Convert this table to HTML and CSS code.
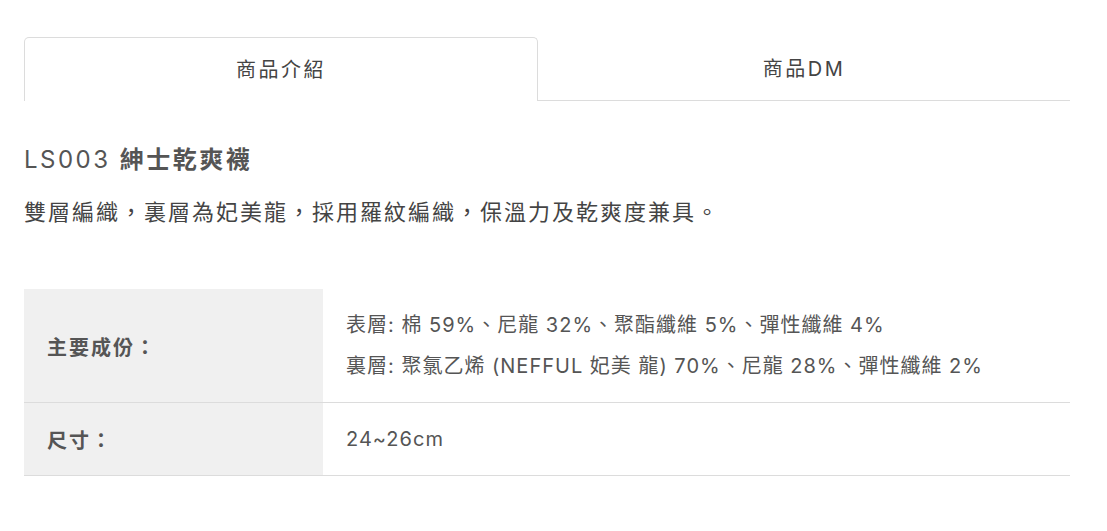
FILE: index.html
```html
<!DOCTYPE html>
<html lang="zh-Hant">
<head>
<meta charset="utf-8">
<title>LS003 紳士乾爽襪</title>
<link rel="stylesheet" href="styles.css">
</head>
<body>
<div class="page">
  <div class="tabs">
    <div class="tab active">商品介紹</div>
    <div class="tab">商品DM</div>
  </div>
  <h1 class="title">LS003 <b>紳士乾爽襪</b></h1>
  <p class="desc">雙層編織，裏層為妃美龍，採用羅紋編織，保溫力及乾爽度兼具。</p>
  <table class="spec">
    <tr class="row-tall">
      <th>主要成份：</th>
      <td>
        <div class="line">表層: 棉 59%、尼龍 32%、聚酯纖維 5%、彈性纖維 4%</div>
        <div class="line">裏層: 聚氯乙烯 (NEFFUL 妃美 龍) 70%、尼龍 28%、彈性纖維 2%</div>
      </td>
    </tr>
    <tr>
      <th>尺寸：</th>
      <td><div class="line">24~26cm</div></td>
    </tr>
  </table>
</div>
</body>
</html>
```
FILE: styles.css
```css
html, body {
  margin: 0;
  padding: 0;
  background: #fff;
}
body {
  font-family: Inter, "Noto Sans CJK TC", sans-serif;
  color: #555;
}
.page {
  width: 1046px;
  padding: 37px 0 0 24px;
}
.tabs {
  display: flex;
  height: 64px;
}
.tab {
  box-sizing: border-box;
  height: 64px;
  display: flex;
  align-items: center;
  justify-content: center;
  font-size: 20px;
  letter-spacing: 2.5px;
  color: #444;
  padding-bottom: 2px;
}
.tab.active {
  width: 514px;
  border: 1px solid #dcdcdc;
  border-bottom: none;
  border-radius: 5px 5px 0 0;
}
.tab:not(.active) {
  flex: 1;
  border-bottom: 1px solid #dcdcdc;
}
.title {
  margin: 43px 0 0 0;
  font-size: 24px;
  line-height: 32px;
  font-weight: 400;
  letter-spacing: 2.5px;
  color: #555;
}
.title b {
  font-weight: 700;
}
.desc {
  margin: 20px 0 0 0;
  font-size: 22px;
  line-height: 32px;
  letter-spacing: 2px;
  color: #444;
}
.spec {
  margin-top: 61px;
  width: 1046px;
  border-collapse: collapse;
}
.spec tr {
  border-bottom: 1px solid #dcdcdc;
}
.spec th {
  width: 299px;
  box-sizing: border-box;
  background: #f0f0f0;
  text-align: left;
  font-weight: 700;
  font-size: 20px;
  letter-spacing: 2px;
  color: #555;
  padding: 16px 23px 15px;
  vertical-align: middle;
}
.spec td {
  padding: 16px 23px 15px;
  font-size: 20px;
  letter-spacing: 1px;
  color: #555;
  vertical-align: middle;
}
.line {
  line-height: 41px;
}
```
